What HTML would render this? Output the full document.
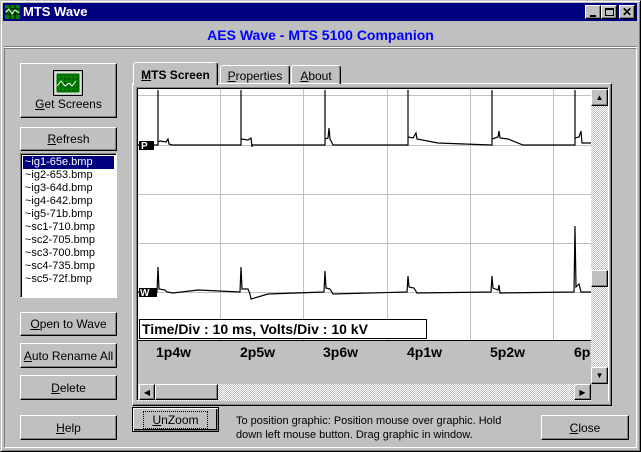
<!DOCTYPE html>
<html><head><style>
*{box-sizing:border-box;margin:0;padding:0}
body{width:641px;height:452px;background:#c0c0c0;font-family:"Liberation Sans",sans-serif;font-size:11px;position:relative;overflow:hidden}
.a{position:absolute}
.btn{position:absolute;background:#c0c0c0;border:1px solid;border-color:#fff #000 #000 #fff;box-shadow:inset -1px -1px 0 #808080;display:flex;align-items:center;justify-content:center;font-size:12px;color:#000}
u{text-decoration:underline}
.tab{position:absolute;border:1px solid;border-color:#fff #000 transparent #fff;border-bottom:none;box-shadow:inset -1px 0 0 #808080;border-radius:3px 3px 0 0;font-size:12px;text-align:center;padding-top:3px}
.li{height:13px;line-height:13px;padding-left:2px;font-size:11px}
</style></head><body>
<div class="a" style="left:0;top:0;width:641px;height:452px;border:1px solid;border-color:#c0c0c0 #000 #000 #c0c0c0;box-shadow:inset 1px 1px 0 #fff,inset -1px -1px 0 #808080"></div>
<div class="a" style="left:3px;top:3px;width:634px;height:18px;background:#000080;color:#fff;font-weight:bold;font-size:13px;line-height:18px;padding-left:20px">MTS Wave</div>
<svg class="a" style="left:5px;top:5px" width="15" height="14"><rect width="15" height="14" fill="#008000"/><path d="M0 4h15M0 9h15M5 0v14M10 0v14" stroke="#000"/><path d="M1 7l3-3 3 5 3-4 4 3" stroke="#fff" fill="none"/></svg>
<div class="btn" style="left:585px;top:5px;width:16px;height:14px"><div style="width:6px;height:2px;background:#000;margin-top:7px"></div></div>
<div class="btn" style="left:601px;top:5px;width:16px;height:14px"><div style="width:9px;height:8px;border:1px solid #000;border-top-width:2px"></div></div>
<div class="btn" style="left:619px;top:5px;width:16px;height:14px;font-weight:bold;font-size:12px">✕</div>
<div class="a" style="left:4px;top:22px;width:633px;text-align:center;color:#0000ff;font-weight:bold;font-size:14px;line-height:26px">AES Wave - MTS 5100 Companion</div>
<div class="a" style="left:4px;top:46px;width:633px;height:2px;border-top:1px solid #808080;border-bottom:1px solid #fff"></div>
<div class="a" style="left:4px;top:48px;width:633px;height:400px;border:1px solid;border-color:#808080 #fff #fff #808080"></div>

<div class="btn" style="left:20px;top:63px;width:97px;height:55px;flex-direction:column;justify-content:flex-end;padding-bottom:6px"><span><u>G</u>et Screens</span></div>
<svg class="a" style="left:53px;top:70px" width="30" height="26"><rect x=".5" y=".5" width="29" height="25" fill="#c0c0c0" stroke="#000"/><rect x="3" y="3" width="24" height="20" fill="#006000" stroke="#fff"/><path d="M6 3v20M10 3v20M14 3v20M18 3v20M22 3v20M3 7h24M3 11h24M3 15h24M3 19h24" stroke="#00a000" stroke-width=".8"/><path d="M4 16l4-5 4 5 4-3 3 3 4-5" stroke="#fff" fill="none"/></svg>
<div class="btn" style="left:20px;top:127px;width:97px;height:24px"><span><u>R</u>efresh</span></div>
<div class="a" style="left:20px;top:153px;width:97px;height:145px;background:#fff;border:1px solid;border-color:#808080 #fff #fff #808080;box-shadow:inset 1px 1px 0 #000;padding:2px">
<div class="li" style="background:#000080;color:#fff">~ig1-65e.bmp</div><div class="li">~ig2-653.bmp</div><div class="li">~ig3-64d.bmp</div><div class="li">~ig4-642.bmp</div><div class="li">~ig5-71b.bmp</div><div class="li">~sc1-710.bmp</div><div class="li">~sc2-705.bmp</div><div class="li">~sc3-700.bmp</div><div class="li">~sc4-735.bmp</div><div class="li">~sc5-72f.bmp</div></div>
<div class="btn" style="left:20px;top:312px;width:97px;height:24px"><span><u>O</u>pen to Wave</span></div>
<div class="btn" style="left:20px;top:343px;width:97px;height:25px"><span><u>A</u>uto Rename All</span></div>
<div class="btn" style="left:20px;top:375px;width:97px;height:25px"><span><u>D</u>elete</span></div>
<div class="btn" style="left:20px;top:415px;width:97px;height:25px"><span><u>H</u>elp</span></div>

<div class="a" style="left:132px;top:83px;width:480px;height:323px;border:1px solid;border-color:#fff #000 #000 #fff;box-shadow:inset -1px -1px 0 #808080"></div>
<div class="tab" style="left:220px;top:65px;width:70px;height:19px"><u>P</u>roperties</div>
<div class="tab" style="left:291px;top:65px;width:50px;height:19px"><u>A</u>bout</div>
<div class="tab" style="left:133px;top:62px;width:85px;height:23px;background:#c0c0c0;font-weight:bold;font-size:12px;padding-top:5px"><u>M</u>TS Screen</div>

<div class="a" style="left:136px;top:87px;width:473px;height:314px;border:1px solid;border-color:#808080 #fff #fff #808080;box-shadow:inset 2px 2px 0 #000"></div>
<svg class="a" style="left:138px;top:89px" width="453" height="296">
<rect x="0" y="0" width="453" height="296" fill="#fff"/>
<g stroke="#c0c0c0" stroke-width="1">
<path d="M82.5 0v252M165.5 0v252M249.5 0v252M332.5 0v252M415.5 0v252M0 6.5h453M0 56.5h453M0 105.5h453M0 154.5h453M0 203.5h453"/></g>
<rect x="0" y="251" width="453" height="45" fill="#c0c0c0"/>
<path d="M0 251.5h453" stroke="#000"/>
<g stroke="#000" fill="none" stroke-width="1.2">
<path d="M0 56 L20 56 L20 1 L20 53 L22 52 L28 53 L30 50 L31 55 L34 56 L102 56 L103 56 L103 1 L103 50 L110 51 L113 49 L114 58 L114 56 L186 56 L187 56 L187 1 L187 50 L190 49 L191 39 L192 50 L195 56 L269 56 L270 56 L270 1 L270 48 L275 49 L278 44 L279 50 L300 54 L353 56 L354 56 L354 1 L354 50 L360 48 L361 42 L362 49 L370 50 L385 56 L436 56 L437 56 L437 1 L437 49 L441 48 L443 42 L444 54 L453 54"/>
<path d="M0 203 L19 203 L20 178 L21 200 L27 201 L29 203 L35 204 L60 201 L102 203 L103 178 L104 200 L110 200 L112 205 L113 210 L130 205 L186 203 L187 182 L188 199 L192 200 L195 205 L269 203 L270 187 L271 198 L276 199 L279 204 L353 203 L354 187 L355 199 L360 201 L361 196 L362 204 L436 203 L437 137 L438 198 L441 195 L443 203 L453 203"/>
</g>
<rect x="1" y="52" width="15" height="9" fill="#000"/><text x="3" y="60" fill="#fff" font-weight="bold" font-size="10" font-family="Liberation Sans">P</text>
<rect x="1" y="199" width="18" height="9" fill="#000"/><text x="2" y="207" fill="#fff" font-weight="bold" font-size="10" font-family="Liberation Sans">W</text>
<rect x="1.5" y="230.5" width="287" height="19" fill="#fff" stroke="#000"/>
<text x="4" y="245" font-size="14" font-weight="bold" font-family="Liberation Sans">Time/Div : 10 ms, Volts/Div : 10 kV</text>
<g font-size="14" font-weight="bold" font-family="Liberation Sans"><text x="18" y="268">1p4w</text><text x="102" y="268">2p5w</text><text x="185" y="268">3p6w</text><text x="269" y="268">4p1w</text><text x="352" y="268">5p2w</text><text x="436" y="268">6p</text></g>
</svg>
<div class="a" style="left:591px;top:89px;width:17px;height:296px;background:repeating-conic-gradient(#c0c0c0 0 25%,#fff 0 50%) 0 0/2px 2px"></div>
<div class="btn" style="left:591px;top:89px;width:17px;height:17px;font-size:8px">▲</div>
<div class="btn" style="left:591px;top:270px;width:17px;height:17px"></div>
<div class="btn" style="left:591px;top:367px;width:17px;height:17px;font-size:8px">▼</div>
<div class="a" style="left:138px;top:384px;width:453px;height:17px;background:repeating-conic-gradient(#c0c0c0 0 25%,#fff 0 50%) 0 0/2px 2px"></div>
<div class="btn" style="left:139px;top:384px;width:16px;height:16px;font-size:8px">◀</div>
<div class="btn" style="left:155px;top:384px;width:63px;height:16px"></div>
<div class="btn" style="left:574px;top:384px;width:17px;height:16px;font-size:8px">▶</div>
<div class="a" style="left:591px;top:384px;width:17px;height:17px;background:#c0c0c0"></div>

<div class="btn" style="left:132px;top:407px;width:87px;height:25px;border:1px solid #000;box-shadow:inset 1px 1px 0 #fff,inset -1px -1px 0 #808080,inset -2px -2px 0 #000"><span style="outline:1px dotted #000;padding:1px 8px"><u>U</u>nZoom</span></div>
<div class="a" style="left:236px;top:414px;font-size:11px;line-height:14px">To position graphic: Position mouse over graphic. Hold<br>down left mouse button. Drag graphic in window.</div>
<div class="btn" style="left:541px;top:415px;width:88px;height:25px"><span><u>C</u>lose</span></div>
</body></html>
